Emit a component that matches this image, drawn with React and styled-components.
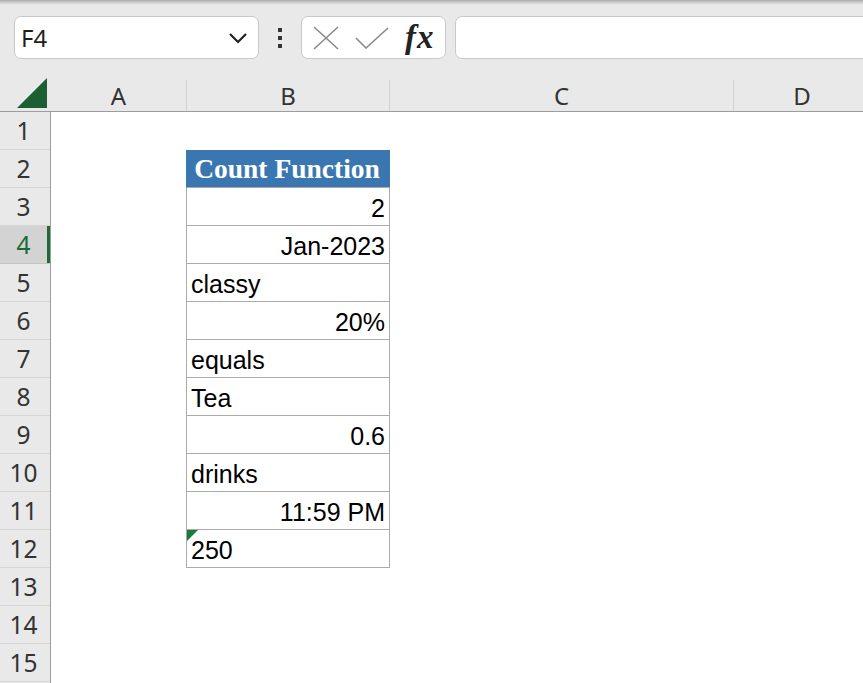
import React from "react";
import styled, { createGlobalStyle } from "styled-components";

const GlobalStyle = createGlobalStyle`
  html, body { margin: 0; padding: 0; }
  body {
    background: #e9e9e9;
    overflow: hidden;
    font-family: "Noto Sans", "Open Sans", sans-serif;
  }
  * { box-sizing: border-box; }
`;

const Page = styled.div`
  width: 863px;
  height: 683px;
  display: flex;
  flex-direction: column;
  background: #e9e9e9;
  overflow: hidden;
`;

const TopShadow = styled.div`
  height: 5px;
  background: linear-gradient(#a9a9a9, #cfcfcf 50%, #e9e9e9);
`;

const Toolbar = styled.div`
  height: 65px;
  display: flex;
  align-items: flex-start;
  padding: 11px 0 0 14px;
`;

const NameBox = styled.div`
  width: 245px;
  height: 43px;
  background: #fff;
  border: 1px solid #c9c9c9;
  border-radius: 7px;
  display: flex;
  align-items: center;
  justify-content: space-between;
  padding: 0 10px 0 6px;
  font-size: 24px;
  color: #1f1f1f;
`;

const Dots = styled.div`
  width: 42px;
  height: 43px;
  display: flex;
  flex-direction: column;
  align-items: center;
  justify-content: center;
  gap: 4px;
  span {
    width: 4px;
    height: 4px;
    background: #333;
  }
`;

const FormulaButtons = styled.div`
  width: 145px;
  height: 43px;
  background: #fff;
  border: 1px solid #c9c9c9;
  border-radius: 7px;
  display: flex;
  align-items: center;
  padding: 0 0 0 9px;
`;

const IconSlot = styled.div`
  width: ${(p) => p.$w}px;
  display: flex;
  align-items: center;
  justify-content: center;
`;

const Fx = styled.span`
  font-family: "Liberation Serif", "DejaVu Serif", serif;
  font-style: italic;
  font-weight: bold;
  font-size: 33px;
  color: #222;
  line-height: 1;
  margin-left: 2px;
  margin-top: 0px;
  letter-spacing: 1px;
`;

const FormulaInput = styled.div`
  flex: 1;
  height: 43px;
  margin-left: 9px;
  margin-right: -12px;
  background: #fff;
  border: 1px solid #c9c9c9;
  border-radius: 7px;
`;

const HeaderRow = styled.div`
  height: 42px;
  display: flex;
  border-bottom: 1px solid #9d9d9d;
`;

const Corner = styled.div`
  width: 51px;
  flex: none;
  position: relative;
  svg { position: absolute; left: 17px; top: 8px; }
`;

const ColHeader = styled.div`
  width: ${(p) => p.$w}px;
  flex: none;
  height: 31px;
  margin-top: 10px;
  border-right: ${(p) => (p.$last ? "none" : "1px solid #d2d2d2")};
  display: flex;
  align-items: center;
  justify-content: center;
  font-size: 24px;
  color: #333;
`;

const Body = styled.div`
  flex: 1;
  display: flex;
`;

const RowHeaders = styled.div`
  width: 51px;
  flex: none;
  border-right: 1px solid #9d9d9d;
  display: flex;
  flex-direction: column;
`;

const RowHeader = styled.div`
  height: 38px;
  flex: none;
  display: flex;
  align-items: center;
  justify-content: center;
  padding-right: 3px;
  font-size: 24.5px;
  color: ${(p) => (p.$active ? "#1b6b37" : "#333")};
  background: ${(p) => (p.$active ? "#d3d3d3" : "#e9e9e9")};
  border-bottom: 1px solid ${(p) => (p.$active ? "#c4c4c4" : "#d6d6d6")};
  box-shadow: ${(p) => (p.$active ? "inset -3px 0 0 #1d6b35" : "none")};
`;

const Sheet = styled.div`
  flex: 1;
  background: #fff;
  display: flex;
  flex-direction: column;
`;

const SheetRow = styled.div`
  height: 38px;
  flex: none;
  display: flex;
`;

const Spacer = styled.div`
  width: 135px;
  flex: none;
`;

const Cell = styled.div`
  width: 204px;
  flex: none;
  position: relative;
  display: flex;
  align-items: center;
  justify-content: ${(p) => (p.$align === "right" ? "flex-end" : "flex-start")};
  padding: 3px 4px 0 4px;
  border-left: 1px solid #ababab;
  border-right: 1px solid #ababab;
  border-bottom: 1px solid #ababab;
  font-family: "Liberation Sans", Arial, sans-serif;
  font-size: 25px;
  color: #000;
`;

const HeadCell = styled.div`
  width: 204px;
  flex: none;
  display: flex;
  align-items: center;
  justify-content: center;
  background: #3a77b0;
  border-left: 1px solid #3a77b0;
  border-bottom: 1px solid #ababab;
  font-family: "Liberation Serif", "Times New Roman", serif;
  font-weight: bold;
  font-size: 27.5px;
  color: #fff;
  padding: 1px 3px 0 0;
`;

const ErrorMark = styled.span`
  position: absolute;
  left: 0;
  top: 0;
  width: 0;
  height: 0;
  border-top: 11px solid #1a7a3a;
  border-right: 11px solid transparent;
`;

const rows = [
  null,
  { head: "Count Function" },
  { v: "2", a: "right" },
  { v: "Jan-2023", a: "right" },
  { v: "classy", a: "left" },
  { v: "20%", a: "right" },
  { v: "equals", a: "left" },
  { v: "Tea", a: "left" },
  { v: "0.6", a: "right" },
  { v: "drinks", a: "left" },
  { v: "11:59 PM", a: "right" },
  { v: "250", a: "left", mark: true },
  null,
  null,
  null,
];

export default function App() {
  return (
    <Page>
      <GlobalStyle />
      <TopShadow />
      <Toolbar>
        <NameBox>
          <span>F4</span>
          <svg width="20" height="12" viewBox="0 0 20 12">
            <polyline points="2,2 10,10 18,2" fill="none" stroke="#222" strokeWidth="2.2" />
          </svg>
        </NameBox>
        <Dots>
          <span />
          <span />
          <span />
        </Dots>
        <FormulaButtons>
          <IconSlot $w={30}>
            <svg width="26" height="24" viewBox="0 0 26 24">
              <line x1="1" y1="1" x2="25" y2="23" stroke="#8a8a8a" strokeWidth="1.6" />
              <line x1="25" y1="1" x2="1" y2="23" stroke="#8a8a8a" strokeWidth="1.6" />
            </svg>
          </IconSlot>
          <IconSlot $w={62}>
            <svg width="34" height="22" viewBox="0 0 34 22">
              <polyline points="1,11 11,21 33,1" fill="none" stroke="#8a8a8a" strokeWidth="1.6" />
            </svg>
          </IconSlot>
          <Fx>fx</Fx>
        </FormulaButtons>
        <FormulaInput />
      </Toolbar>
      <HeaderRow>
        <Corner>
          <svg width="31" height="31" viewBox="0 0 31 31">
            <polygon points="30,0 30,30 0,30" fill="#1c5f33" />
          </svg>
        </Corner>
        <ColHeader $w={136}>A</ColHeader>
        <ColHeader $w={203}>B</ColHeader>
        <ColHeader $w={344}>C</ColHeader>
        <ColHeader $w={136} $last>D</ColHeader>
      </HeaderRow>
      <Body>
        <RowHeaders>
          {rows.map((_, i) => (
            <RowHeader key={i} $active={i === 3}>
              {i + 1}
            </RowHeader>
          ))}
        </RowHeaders>
        <Sheet>
          {rows.map((r, i) => (
            <SheetRow key={i}>
              <Spacer />
              {r && r.head && <HeadCell>{r.head}</HeadCell>}
              {r && r.v && (
                <Cell $align={r.a}>
                  {r.mark && <ErrorMark />}
                  {r.v}
                </Cell>
              )}
            </SheetRow>
          ))}
        </Sheet>
      </Body>
    </Page>
  );
}
